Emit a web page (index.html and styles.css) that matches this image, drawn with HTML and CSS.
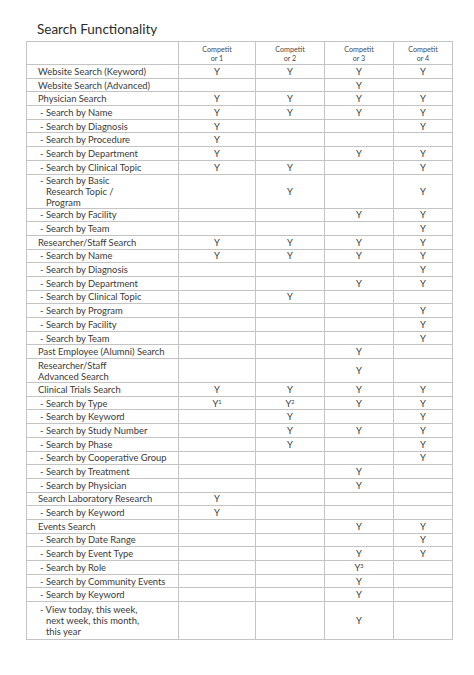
FILE: index.html
```html
<!DOCTYPE html>
<html lang="en">
<head>
<meta charset="utf-8">
<title>Search Functionality</title>
<link rel="stylesheet" href="styles.css">
</head>
<body>
<div class="page">
  <h1 class="title">Search Functionality</h1>
  <table class="grid">
    <colgroup>
      <col class="c-feat"><col class="c-1"><col class="c-2"><col class="c-3"><col class="c-4">
    </colgroup>
    <thead>
      <tr class="head">
        <th></th>
        <th>Competit<br>or 1</th>
        <th>Competit<br>or 2</th>
        <th>Competit<br>or 3</th>
        <th>Competit<br>or 4</th>
      </tr>
    </thead>
    <tbody>
      <tr><td class="feat">Website Search (Keyword)</td><td>Y</td><td>Y</td><td>Y</td><td>Y</td></tr>
      <tr><td class="feat">Website Search (Advanced)</td><td></td><td></td><td>Y</td><td></td></tr>
      <tr><td class="feat">Physician Search</td><td>Y</td><td>Y</td><td>Y</td><td>Y</td></tr>
      <tr><td class="feat sub">- Search by Name</td><td>Y</td><td>Y</td><td>Y</td><td>Y</td></tr>
      <tr><td class="feat sub">- Search by Diagnosis</td><td>Y</td><td></td><td></td><td>Y</td></tr>
      <tr><td class="feat sub">- Search by Procedure</td><td>Y</td><td></td><td></td><td></td></tr>
      <tr><td class="feat sub">- Search by Department</td><td>Y</td><td></td><td>Y</td><td>Y</td></tr>
      <tr><td class="feat sub">- Search by Clinical Topic</td><td>Y</td><td>Y</td><td></td><td>Y</td></tr>
      <tr class="three"><td class="feat sub">- Search by Basic<br>Research Topic /<br>Program</td><td></td><td>Y</td><td></td><td>Y</td></tr>
      <tr><td class="feat sub">- Search by Facility</td><td></td><td></td><td>Y</td><td>Y</td></tr>
      <tr><td class="feat sub">- Search by Team</td><td></td><td></td><td></td><td>Y</td></tr>
      <tr><td class="feat">Researcher/Staff Search</td><td>Y</td><td>Y</td><td>Y</td><td>Y</td></tr>
      <tr><td class="feat sub">- Search by Name</td><td>Y</td><td>Y</td><td>Y</td><td>Y</td></tr>
      <tr><td class="feat sub">- Search by Diagnosis</td><td></td><td></td><td></td><td>Y</td></tr>
      <tr><td class="feat sub">- Search by Department</td><td></td><td></td><td>Y</td><td>Y</td></tr>
      <tr><td class="feat sub">- Search by Clinical Topic</td><td></td><td>Y</td><td></td><td></td></tr>
      <tr><td class="feat sub">- Search by Program</td><td></td><td></td><td></td><td>Y</td></tr>
      <tr><td class="feat sub">- Search by Facility</td><td></td><td></td><td></td><td>Y</td></tr>
      <tr><td class="feat sub">- Search by Team</td><td></td><td></td><td></td><td>Y</td></tr>
      <tr><td class="feat">Past Employee (Alumni) Search</td><td></td><td></td><td>Y</td><td></td></tr>
      <tr class="two"><td class="feat">Researcher/Staff<br>Advanced Search</td><td></td><td></td><td>Y</td><td></td></tr>
      <tr><td class="feat">Clinical Trials Search</td><td>Y</td><td>Y</td><td>Y</td><td>Y</td></tr>
      <tr><td class="feat sub">- Search by Type</td><td>Y<span class="note">1</span></td><td>Y<span class="note">2</span></td><td>Y</td><td>Y</td></tr>
      <tr><td class="feat sub">- Search by Keyword</td><td></td><td>Y</td><td></td><td>Y</td></tr>
      <tr><td class="feat sub">- Search by Study Number</td><td></td><td>Y</td><td>Y</td><td>Y</td></tr>
      <tr><td class="feat sub">- Search by Phase</td><td></td><td>Y</td><td></td><td>Y</td></tr>
      <tr><td class="feat sub">- Search by Cooperative Group</td><td></td><td></td><td></td><td>Y</td></tr>
      <tr><td class="feat sub">- Search by Treatment</td><td></td><td></td><td>Y</td><td></td></tr>
      <tr><td class="feat sub">- Search by Physician</td><td></td><td></td><td>Y</td><td></td></tr>
      <tr><td class="feat">Search Laboratory Research</td><td>Y</td><td></td><td></td><td></td></tr>
      <tr><td class="feat sub">- Search by Keyword</td><td>Y</td><td></td><td></td><td></td></tr>
      <tr><td class="feat">Events Search</td><td></td><td></td><td>Y</td><td>Y</td></tr>
      <tr><td class="feat sub">- Search by Date Range</td><td></td><td></td><td></td><td>Y</td></tr>
      <tr><td class="feat sub">- Search by Event Type</td><td></td><td></td><td>Y</td><td>Y</td></tr>
      <tr><td class="feat sub">- Search by Role</td><td></td><td></td><td>Y<span class="note">3</span></td><td></td></tr>
      <tr><td class="feat sub">- Search by Community Events</td><td></td><td></td><td>Y</td><td></td></tr>
      <tr><td class="feat sub">- Search by Keyword</td><td></td><td></td><td>Y</td><td></td></tr>
      <tr class="three last"><td class="feat sub">- View today, this week,<br>next week, this month,<br>this year</td><td></td><td></td><td>Y</td><td></td></tr>
    </tbody>
  </table>
</div>
</body>
</html>
```
FILE: styles.css
```css
html, body {
  margin: 0;
  padding: 0;
  background: #ffffff;
}

.page {
  padding: 21px 0 0 26px;
  font-family: Lato, "Liberation Sans", sans-serif;
  color: #3a3a3a;
}

.title {
  margin: 0 0 4px 11px;
  font-size: 13.5px;
  line-height: 16px;
  font-weight: 400;
  color: #2b2b2b;
}

.grid {
  width: 426px;
  table-layout: fixed;
  border-collapse: collapse;
  font-size: 9.4px;
  line-height: 11px;
}

.c-feat { width: 152px; }
.c-1 { width: 77px; }
.c-2 { width: 69px; }
.c-3 { width: 69px; }
.c-4 { width: 59px; }

.grid th,
.grid td {
  border: 1px solid #c4c4c4;
  padding: 0;
  text-align: center;
  vertical-align: middle;
}

.grid th {
  font-weight: 400;
  font-size: 7.2px;
  line-height: 9px;
  padding-top: 1px;
  color: #4a4a4a;
}

.head { height: 23px; }
.grid tbody tr { height: 13.7px; }
.grid tbody tr.two { height: 24px; }
.grid tbody tr.three { height: 33px; }
.grid tbody tr.three.last { height: 38px; }

.grid td.feat {
  text-align: left;
  padding-left: 11px;
  white-space: nowrap;
}

.grid td.feat.sub {
  padding-left: 19px;
  text-indent: -6px;
}

.note {
  font-size: 5.5px;
  line-height: 0;
  vertical-align: 3px;
}
```
